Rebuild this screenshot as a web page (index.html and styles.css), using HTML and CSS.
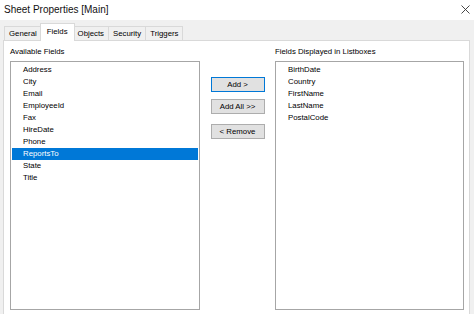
FILE: index.html
```html
<!DOCTYPE html>
<html lang="en">
<head>
    <meta charset="UTF-8">
    <title>Sheet Properties [Main]</title>
    <link rel="stylesheet" href="styles.css">
</head>
<body>
    <div class="window">
        <div class="titlebar">
            <span class="title">Sheet Properties [Main]</span>
            <svg class="close" width="9" height="9" viewBox="0 0 9 9">
                <path d="M0.5 0.5 L8.5 8.5 M8.5 0.5 L0.5 8.5" stroke="#333" stroke-width="0.9" fill="none"/>
            </svg>
        </div>
        <div class="dialog">
            <div class="tabs">
                <div class="tab">General</div>
                <div class="tab active">Fields</div>
                <div class="tab">Objects</div>
                <div class="tab">Security</div>
                <div class="tab last">Triggers</div>
            </div>
            <div class="panel">
                <div class="col">
                    <div class="label">Available Fields</div>
                    <ul class="listbox">
                        <li>Address</li>
                        <li>City</li>
                        <li>Email</li>
                        <li>EmployeeId</li>
                        <li>Fax</li>
                        <li>HireDate</li>
                        <li>Phone</li>
                        <li class="selected">ReportsTo</li>
                        <li>State</li>
                        <li>Title</li>
                    </ul>
                </div>
                <div class="actions">
                    <button class="btn default">Add &gt;</button>
                    <button class="btn add-all">Add All &gt;&gt;</button>
                    <button class="btn remove">&lt; Remove</button>
                </div>
                <div class="col">
                    <div class="label">Fields Displayed in Listboxes</div>
                    <ul class="listbox">
                        <li>BirthDate</li>
                        <li>Country</li>
                        <li>FirstName</li>
                        <li>LastName</li>
                        <li>PostalCode</li>
                    </ul>
                </div>
            </div>
        </div>
    </div>
</body>
</html>
```

FILE: styles.css
```css
body {
    margin: 0;
    font-family: "Liberation Sans", Arial, sans-serif;
    font-size: 7.8px;
    color: #000;
    background-color: #fff;
}
.window {
    width: 474px;
    height: 314px;
    overflow: hidden;
}
.titlebar {
    height: 20px;
    display: flex;
    justify-content: space-between;
    align-items: center;
    padding: 0 4px 2px 4px;
    box-sizing: border-box;
    background-color: #fff;
}
.title {
    font-size: 10px;
    color: #111;
}
.dialog {
    height: 294px;
    background-color: #f0f0f0;
    padding: 0 4px 0 3px;
}
.tabs {
    height: 20px;
    display: flex;
    align-items: flex-end;
    padding-left: 1px;
}
.tab {
    height: 14px;
    line-height: 13px;
    padding: 0 4px;
    box-sizing: border-box;
    border: 1px solid #d9d9d9;
    border-right: none;
    border-bottom: none;
    background-color: #f0f0f0;
}
.tab.last {
    border-right: 1px solid #d9d9d9;
}
.tab.active {
    position: relative;
    z-index: 1;
    height: 18px;
    line-height: 15px;
    margin: 0 -2px -1px -1px;
    padding: 0 6px;
    background-color: #fff;
    border-right: 1px solid #d9d9d9;
}
.tab.active + .tab {
    border-left: none;
    padding-left: 5px;
}
.panel {
    height: 300px;
    display: grid;
    grid-template-columns: 190px 75px 189px;
    align-items: start;
    padding: 6px 5px 0 6px;
    background-color: #fff;
    border: 1px solid #d9d9d9;
}
.label {
    height: 10px;
    line-height: 10px;
    margin-bottom: 4px;
}
.listbox {
    list-style: none;
    margin: 0;
    padding: 2px 1px;
    height: 249px;
    box-sizing: border-box;
    border: 1px solid #a6a6a6;
    background-color: #fff;
}
.listbox li {
    height: 12px;
    line-height: 12px;
    padding-left: 11px;
}
.listbox li.selected {
    background-color: #0078d7;
    color: #fff;
}
.actions {
    display: flex;
    flex-direction: column;
    align-items: center;
    padding-top: 30px;
}
.btn {
    width: 54px;
    height: 15px;
    padding: 0;
    font-family: inherit;
    font-size: 7.8px;
    color: #000;
    background-color: #e1e1e1;
    border: 1px solid #adadad;
}
.btn.default {
    border-color: #0078d7;
}
.btn.add-all {
    margin-top: 7px;
}
.btn.remove {
    margin-top: 10px;
}
```
